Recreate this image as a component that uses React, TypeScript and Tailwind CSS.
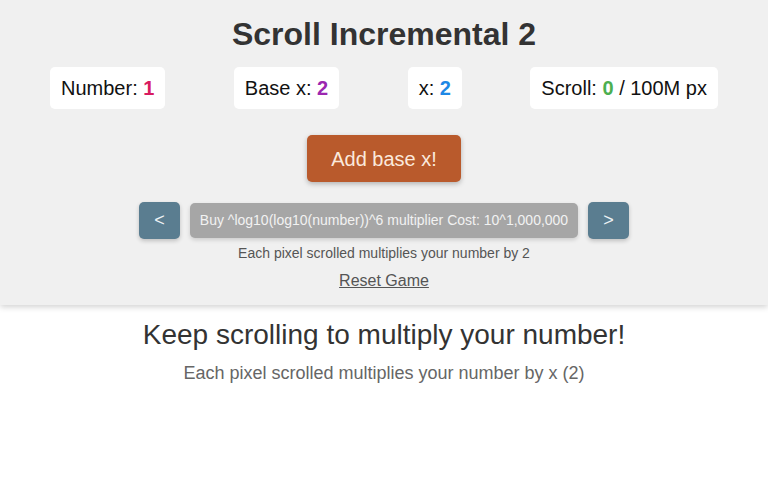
export default function App() {
  return (
    <div className="min-h-screen bg-white font-['Liberation_Sans',Arial,sans-serif]">
      <div className="bg-[#f0f0f0] shadow-[0_2px_6px_rgba(0,0,0,0.18)] pt-[16px] pb-[15px] flex flex-col items-center">
        <h1 className="text-[32px] leading-[37px] font-bold text-[#333]">Scroll Incremental 2</h1>

        <div className="w-full flex justify-between px-[50px] mt-[14px]">
          <div className="bg-white rounded-[5px] h-[42px] px-[11px] flex items-center text-[20px] text-[#111]">
            Number:&nbsp;<span className="font-bold text-[#d81b60]">1</span>
          </div>
          <div className="bg-white rounded-[5px] h-[42px] px-[11px] flex items-center text-[20px] text-[#111]">
            Base x:&nbsp;<span className="font-bold text-[#9c27b0]">2</span>
          </div>
          <div className="bg-white rounded-[5px] h-[42px] px-[11px] flex items-center text-[20px] text-[#111]">
            x:&nbsp;<span className="font-bold text-[#1e88e5]">2</span>
          </div>
          <div className="bg-white rounded-[5px] h-[42px] px-[11px] flex items-center text-[20px] text-[#111]">
            Scroll:&nbsp;<span className="font-bold text-[#4caf50]">0</span>&nbsp;/ 100M px
          </div>
        </div>

        <button className="mt-[26px] h-[47px] px-[24px] rounded-[5px] bg-[#b95a2c] text-[#fbe9dc] text-[20px] shadow-[0_2px_5px_rgba(0,0,0,0.25)]">
          Add base x!
        </button>

        <div className="mt-[20px] flex items-center gap-[10px]">
          <button className="w-[41px] h-[37px] rounded-[5px] bg-[#5a7d90] text-[#eef3f6] text-[18px] shadow-[0_2px_4px_rgba(0,0,0,0.2)]">
            &lt;
          </button>
          <button className="w-[388px] h-[35px] rounded-[5px] bg-[#a6a6a6] text-[#f2f2f2] text-[14px] shadow-[0_2px_4px_rgba(0,0,0,0.15)]">
            Buy ^log10(log10(number))^6 multiplier Cost: 10^1,000,000
          </button>
          <button className="w-[41px] h-[37px] rounded-[5px] bg-[#5a7d90] text-[#eef3f6] text-[18px] shadow-[0_2px_4px_rgba(0,0,0,0.2)]">
            &gt;
          </button>
        </div>

        <p className="mt-[6px] text-[14px] leading-[16px] text-[#555]">
          Each pixel scrolled multiplies your number by 2
        </p>
        <button className="mt-[11px] text-[16px] leading-[18px] text-[#555] underline">Reset Game</button>
      </div>

      <div className="flex flex-col items-center pt-[14px]">
        <h2 className="text-[28px] leading-[32px] text-[#333]">Keep scrolling to multiply your number!</h2>
        <p className="mt-[12px] text-[18px] leading-[21px] text-[#666]">
          Each pixel scrolled multiplies your number by x (2)
        </p>
      </div>
    </div>
  );
}
